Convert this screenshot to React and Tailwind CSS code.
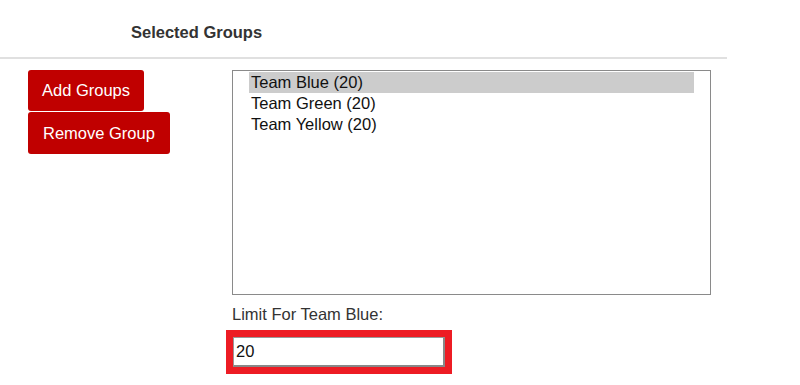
import React from "react";

export default function App() {
  const items = ["Team Blue (20)", "Team Green (20)", "Team Yellow (20)"];
  return (
    <div className="w-[800px] h-[385px] bg-white overflow-hidden text-[#333]" style={{ fontFamily: '"Liberation Sans", Arial, sans-serif' }}>
      <div className="w-[727px] h-[59px] border-b-2 border-[#e0e0e0] flex items-center">
        <div className="ml-[131px] text-[16.5px] font-bold text-[#333] mt-[7px]">Selected Groups</div>
      </div>
      <div className="flex pt-[11px]">
        <div className="ml-[28px] w-[204px] flex flex-col items-start">
          <button className="h-[41px] px-[14px] bg-[#c00000] text-white text-[16.5px] rounded-[3px]">Add Groups</button>
          <button className="mt-[1px] h-[42px] px-[15px] bg-[#c00000] text-white text-[16.5px] rounded-[3px]">Remove Group</button>
        </div>
        <div className="flex flex-col">
          <div className="w-[479px] h-[225px] border border-[#8a8a8a] pl-[16px] pr-[16px] pt-[1px] text-[16.5px] text-[#111]">
            {items.map((t, i) => (
              <div key={t} className={"h-[21px] leading-[21px] pl-[2px] " + (i === 0 ? "bg-[#cccccc]" : "")}>{t}</div>
            ))}
          </div>
          <div className="mt-[9px] text-[16.5px] text-[#333] leading-[20px]">Limit For Team Blue:</div>
          <div className="mt-[6px] -ml-[6px] w-[226px] h-[44px] bg-[#ed1c24] p-[7px]">
            <div className="w-full h-full bg-white border border-[#999] border-r-2 border-b-2 border-r-[#888] border-b-[#888] pl-[2px] flex items-center text-[16.5px] text-[#111]">20</div>
          </div>
        </div>
      </div>
    </div>
  );
}
